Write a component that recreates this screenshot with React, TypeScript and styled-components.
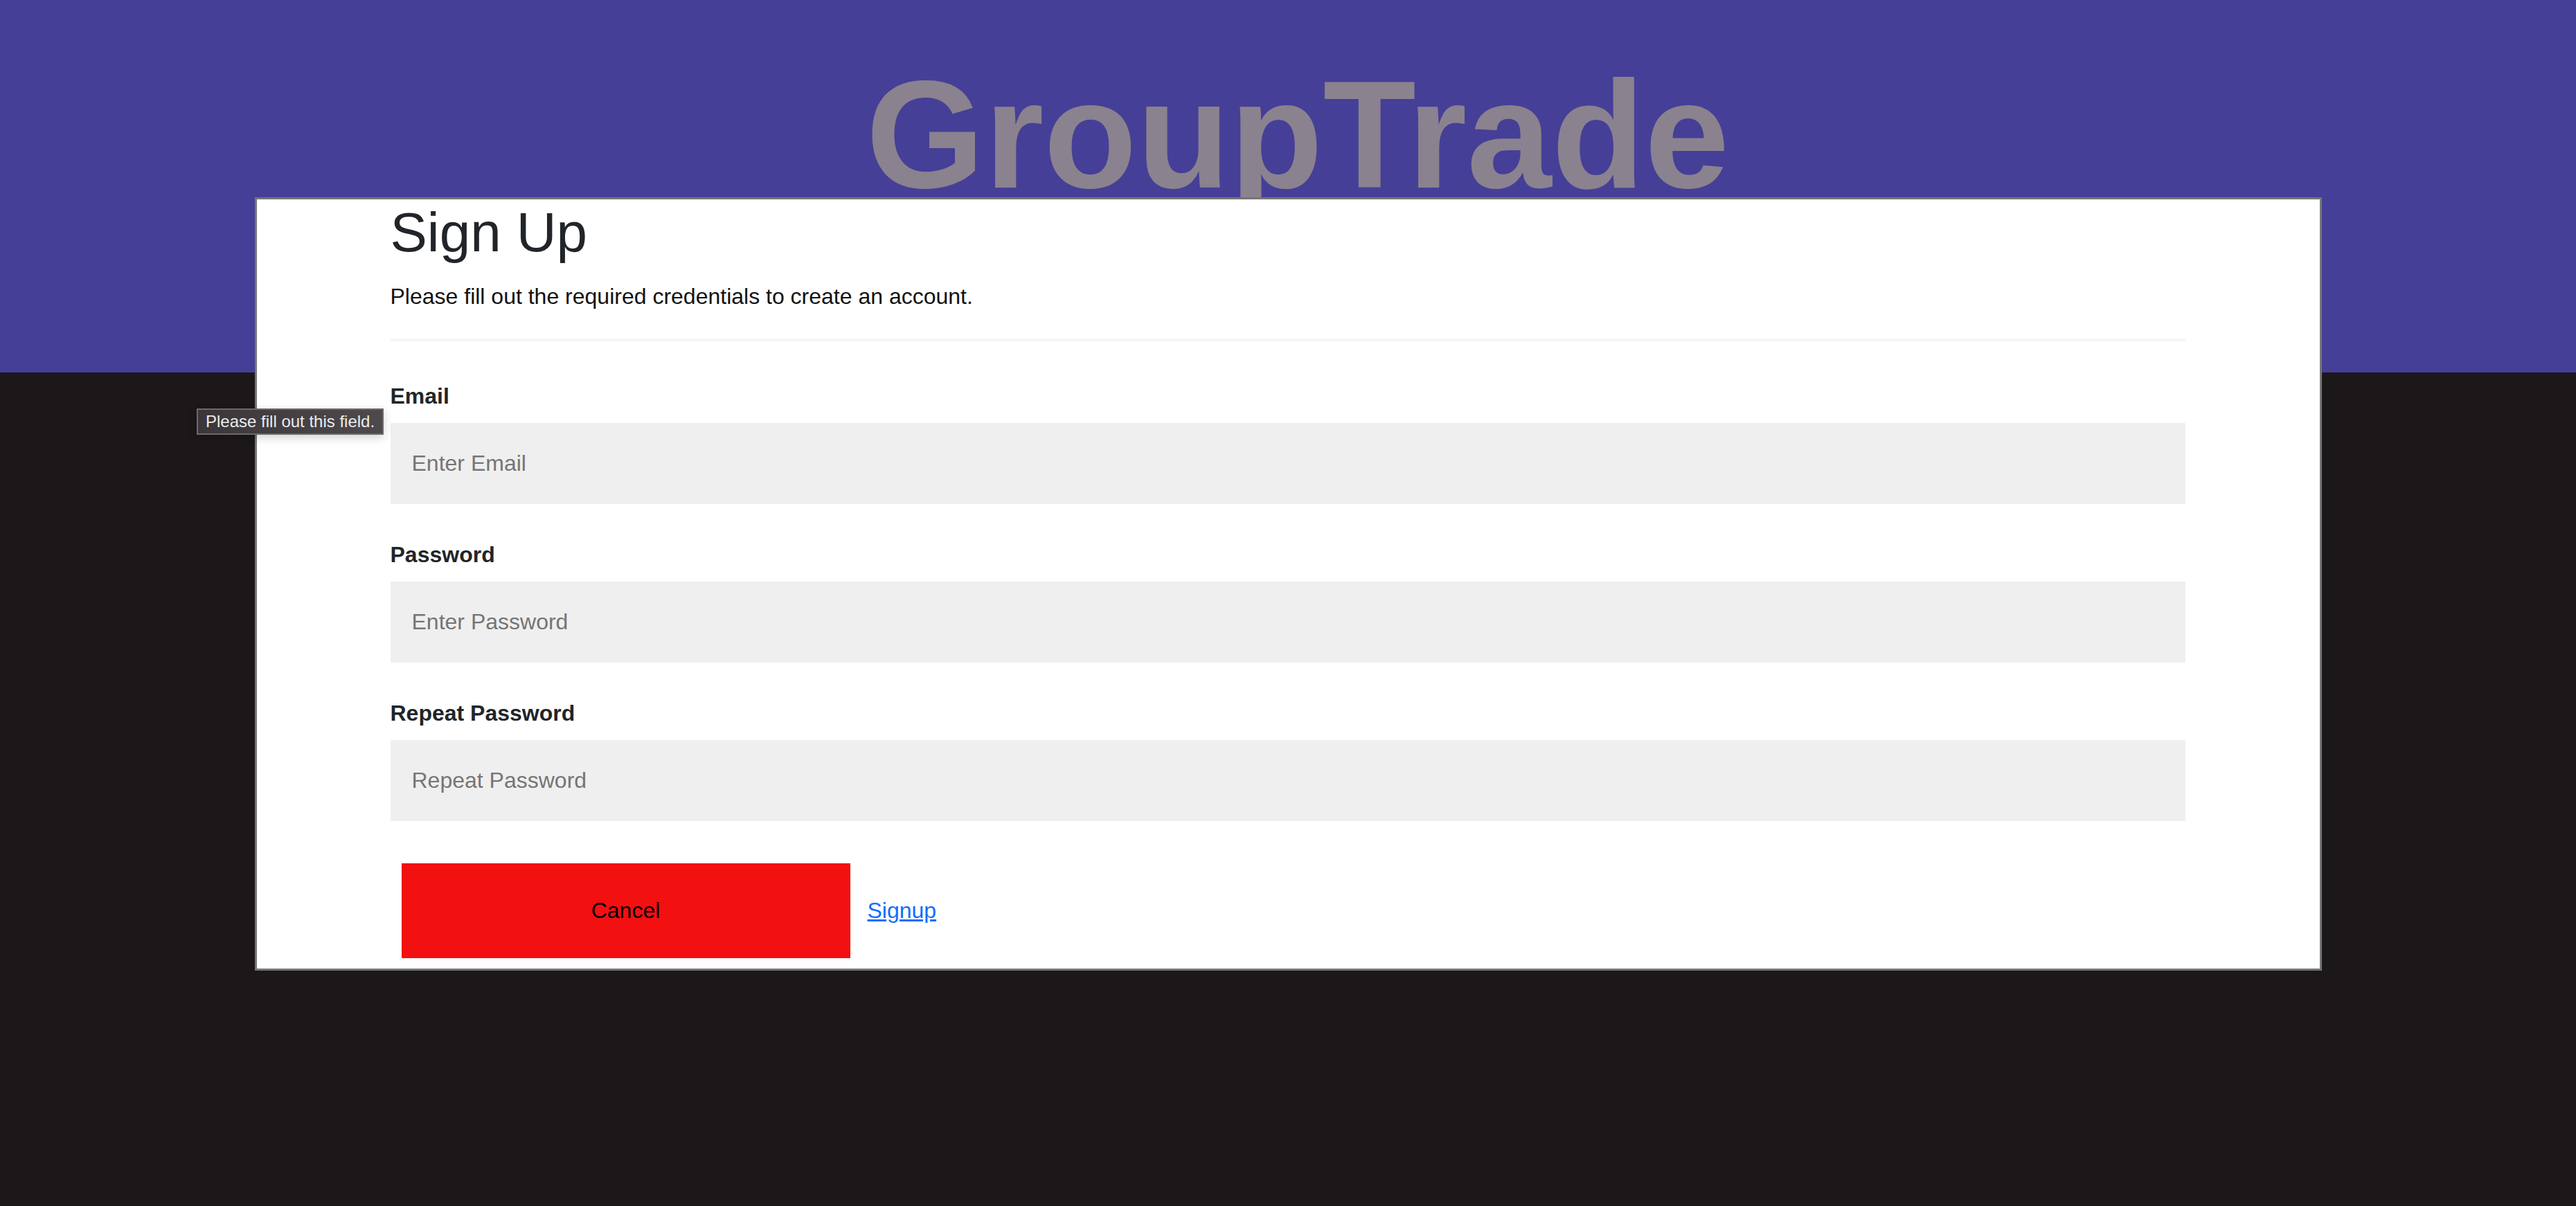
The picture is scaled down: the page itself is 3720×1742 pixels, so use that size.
import React from 'react'
import styled, { createGlobalStyle } from 'styled-components'

const GlobalStyle = createGlobalStyle`
  html, body {
    margin: 0;
    padding: 0;
  }
  body {
    font-family: 'Liberation Sans', Helvetica, Arial, sans-serif;
    color: #212529;
  }
  * {
    box-sizing: border-box;
  }
`

const Page = styled.div`
  position: relative;
  min-height: 100vh;
  background: linear-gradient(to bottom, #463f97 0, #463f97 538px, #1c1819 538px);
`

const Brand = styled.h1`
  height: 285px;
  margin: 0;
  padding: 85px 0 0 28px;
  text-align: center;
  font-size: 220px;
  line-height: 220px;
  font-weight: 700;
  color: #8a828e;
`

// sits above the brand so the descender of the "p" tucks under it
const Card = styled.div`
  position: relative;
  width: calc(80% + 9px);
  margin: 0 auto;
  padding: 0 194px 15px 193px;
  background: #fff;
  border: 3px solid #767676;
`

const Heading = styled.h2`
  margin: 0 0 20px;
  font-size: 80px;
  line-height: 96px;
  font-weight: 400;
  color: #212529;
`

const Intro = styled.p`
  margin: 0 0 37px;
  font-size: 32px;
  line-height: 48px;
  color: #111;
`

const Divider = styled.hr`
  height: 4px;
  margin: 0 0 61px;
  border: none;
  background: #f6f6f6;
`

const Field = styled.div`
  margin-bottom: 55px;
`

const Label = styled.label`
  display: block;
  margin-bottom: 20px;
  font-size: 32px;
  line-height: 37px;
  font-weight: 700;
  color: #212529;
`

const Input = styled.input`
  display: block;
  width: 100%;
  height: 117px;
  padding: 0 31px;
  border: none;
  outline: none;
  background: #efefef;
  font-family: inherit;
  font-size: 32px;
  color: #212529;

  &::placeholder {
    color: #757575;
  }
`

// margin collapses with the last field's bottom margin
const Actions = styled.div`
  display: flex;
  align-items: center;
  gap: 25px;
  margin-top: 61px;
  padding-left: 16px;
`

const CancelButton = styled.button`
  width: 648px;
  height: 137px;
  border: none;
  background: #f21010;
  font-family: inherit;
  font-size: 32px;
  color: #000;
  cursor: pointer;
`

const SignupLink = styled.a`
  font-size: 32px;
  color: #0d6efd;
  text-decoration: underline;
`

const Hint = styled.div`
  position: absolute;
  z-index: 2;
  left: 284px;
  top: 590px;
  height: 38px;
  padding: 0 11px;
  border: 2px solid #6d696b;
  background: linear-gradient(to right, #3b3639, #4e494d);
  box-shadow: 0 4px 14px rgba(0, 0, 0, 0.18);
  font-size: 24px;
  line-height: 34px;
  color: #ececec;
  white-space: nowrap;
`

const fields = [
  { id: 'email', label: 'Email', placeholder: 'Enter Email', type: 'text' },
  { id: 'psw', label: 'Password', placeholder: 'Enter Password', type: 'password' },
  { id: 'psw-repeat', label: 'Repeat Password', placeholder: 'Repeat Password', type: 'password' },
]

const App: React.FC = () => (
  <Page>
    <GlobalStyle />
    <Brand>GroupTrade</Brand>

    <Card>
      <Heading>Sign Up</Heading>
      <Intro>Please fill out the required credentials to create an account.</Intro>
      <Divider />

      {fields.map(field => (
        <Field key={field.id}>
          <Label htmlFor={field.id}>{field.label}</Label>
          <Input id={field.id} type={field.type} placeholder={field.placeholder} />
        </Field>
      ))}

      <Actions>
        <CancelButton type='button'>Cancel</CancelButton>
        <SignupLink href='#'>Signup</SignupLink>
      </Actions>
    </Card>

    <Hint>Please fill out this field.</Hint>
  </Page>
)

export default App
